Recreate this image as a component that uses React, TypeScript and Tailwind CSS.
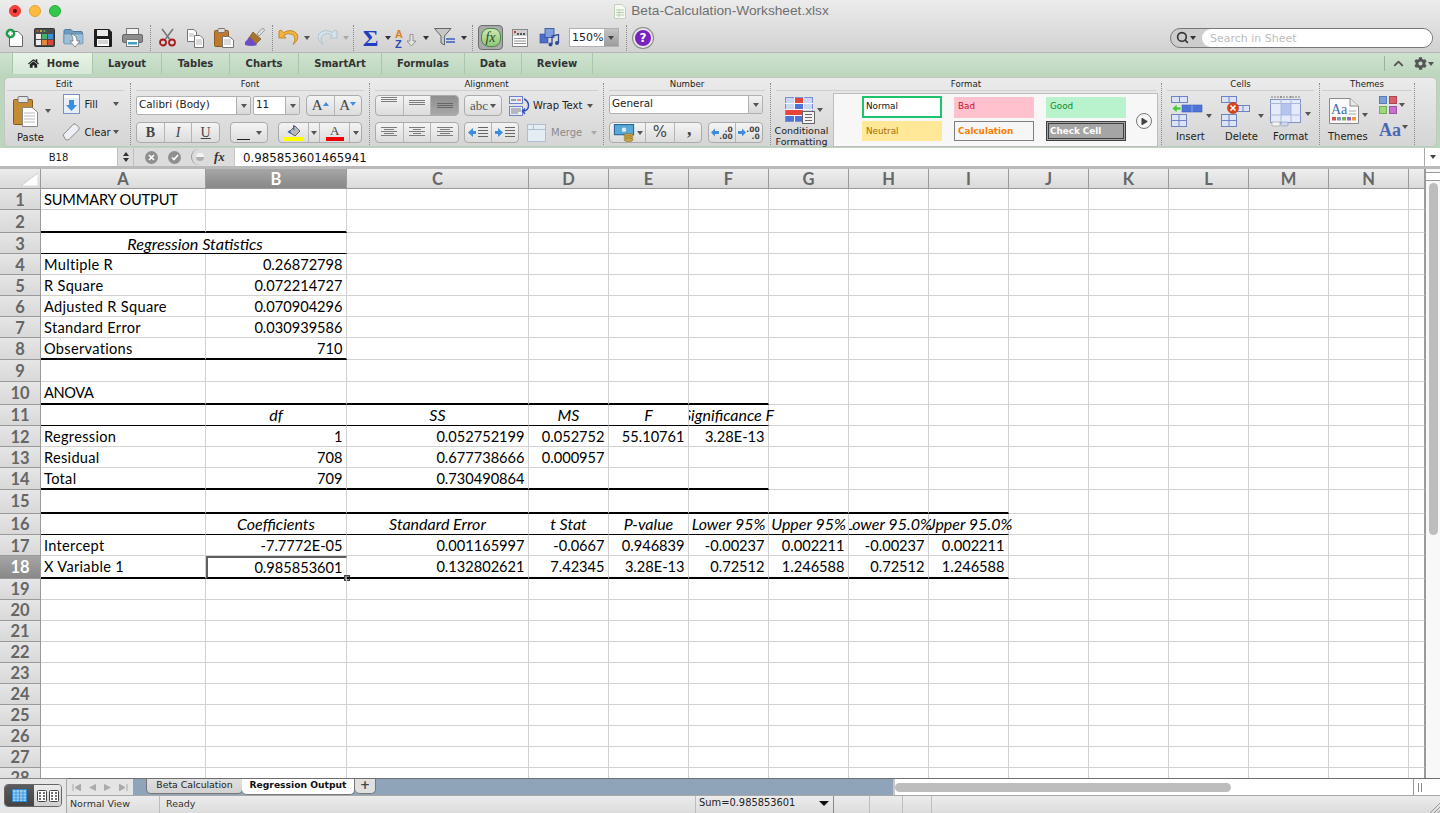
import type { ReactNode } from 'react';
import { FaCog, FaHome, FaPlay } from 'react-icons/fa';
import { ChevronUp, Search } from 'lucide-react';

const columns = ['A', 'B', 'C', 'D', 'E', 'F', 'G', 'H', 'I', 'J', 'K', 'L', 'M', 'N', ''];
const rowCount = 28;

type Align = 'l' | 'r' | 'c';
const cells: Record<string, [string, Align]> = {
    A1: ['SUMMARY OUTPUT', 'l'],
    A4: ['Multiple R', 'l'], B4: ['0.26872798', 'r'],
    A5: ['R Square', 'l'], B5: ['0.072214727', 'r'],
    A6: ['Adjusted R Square', 'l'], B6: ['0.070904296', 'r'],
    A7: ['Standard Error', 'l'], B7: ['0.030939586', 'r'],
    A8: ['Observations', 'l'], B8: ['710', 'r'],
    A10: ['ANOVA', 'l'],
    B11: ['df', 'c'], C11: ['SS', 'c'], D11: ['MS', 'c'], E11: ['F', 'c'], F11: ['Significance F', 'c'],
    A12: ['Regression', 'l'], B12: ['1', 'r'], C12: ['0.052752199', 'r'], D12: ['0.052752', 'r'], E12: ['55.10761', 'r'], F12: ['3.28E-13', 'r'],
    A13: ['Residual', 'l'], B13: ['708', 'r'], C13: ['0.677738666', 'r'], D13: ['0.000957', 'r'],
    A14: ['Total', 'l'], B14: ['709', 'r'], C14: ['0.730490864', 'r'],
    B16: ['Coefficients', 'c'], C16: ['Standard Error', 'c'], D16: ['t Stat', 'c'], E16: ['P-value', 'c'], F16: ['Lower 95%', 'c'], G16: ['Upper 95%', 'c'], H16: ['Lower 95.0%', 'c'], I16: ['Upper 95.0%', 'c'],
    A17: ['Intercept', 'l'], B17: ['-7.7772E-05', 'r'], C17: ['0.001165997', 'r'], D17: ['-0.0667', 'r'], E17: ['0.946839', 'r'], F17: ['-0.00237', 'r'], G17: ['0.002211', 'r'], H17: ['-0.00237', 'r'], I17: ['0.002211', 'r'],
    A18: ['X Variable 1', 'l'], B18: ['0.985853601', 'r'], C18: ['0.132802621', 'r'], D18: ['7.42345', 'r'], E18: ['3.28E-13', 'r'], F18: ['0.72512', 'r'], G18: ['1.246588', 'r'], H18: ['0.72512', 'r'], I18: ['1.246588', 'r'],
};

// bottom rules of the regression tables: row -> [number of columns, thick?]
const rules: Record<number, [number, boolean]> = {
    2: [2, true], 3: [2, false], 8: [2, true],
    10: [6, true], 11: [6, false], 14: [6, true],
    15: [9, true], 16: [9, false], 18: [9, true],
};

const clippedLeft = ['F11', 'H16', 'I16'];

// these rows sit a pixel higher in their band
const isHighRow = (r: number) => r === 10 || r === 11 || r === 15 || r === 16 || r >= 18;

function Caret({ color = 'border-t-[#555]' }: { color?: string }) {
    return <span className={`block w-0 h-0 border-x-[3.5px] border-x-transparent border-t-[4px] ${color}`} />;
}

function Sep() {
    return <div className="w-[1px] h-[26px] border-l border-dotted border-[#8a8a8a] mx-[2.5px] shrink-0" />;
}

function Slot({ w, children }: { w: string; children: ReactNode }) {
    return <div className={`${w} h-full flex items-center justify-center shrink-0`}>{children}</div>;
}

function Seg({ className, children }: { className: string; children: ReactNode }) {
    return (
        <div className={`${className} h-[21px] flex rounded-[4px] border border-[#ababab] bg-gradient-to-b from-[#f4f4f4] to-[#dcdcdc] shrink-0`}>
            {children}
        </div>
    );
}

function SegCell({ className = 'flex-1', dark = false, children }: { className?: string; dark?: boolean; children: ReactNode }) {
    return (
        <div className={`${className} flex items-center justify-center border-r border-[#b5b5b5] last:border-r-0 ${dark ? 'bg-gradient-to-b from-[#8f8f8f] to-[#a8a8a8] rounded-r-[3px]' : ''}`}>
            {children}
        </div>
    );
}

function Combo({ className, label }: { className: string; label: string }) {
    return (
        <div className={`${className} h-[19px] flex bg-white border border-[#b0b0b0] rounded-[2px] shrink-0`}>
            <span className="flex-1 pl-[2px] text-[10.4px] leading-[15px] text-[#222] whitespace-nowrap overflow-hidden">{label}</span>
            <span className="w-[14px] flex items-center justify-center border-l border-[#b0b0b0] bg-gradient-to-b from-[#f2f2f2] to-[#d8d8d8]"><Caret /></span>
        </div>
    );
}

function Group({ title, className, lineClass = 'mx-[3px]', children }: { title: string; className: string; lineClass?: string; children: ReactNode }) {
    return (
        <div className={`${className} h-full shrink-0 relative flex flex-col`}>
            <div className={`h-[13px] ${lineClass} border-b border-[#cfcfcf] text-center text-[8.6px] leading-[13px] text-[#222]`}>{title}</div>
            {children}
        </div>
    );
}

function GroupDots() {
    return <div className="w-[1px] h-[62px] mt-[5px] border-l border-dotted border-[#8a8a8a] shrink-0" />;
}

function AlignLines({ rows, widths, dark = false }: { rows: number; widths?: number[]; dark?: boolean }) {
    const list = Array.from({ length: rows });
    return (
        <svg width="18" height="13" viewBox="0 0 18 13">
            {list.map((_, i) => {
                const w = widths ? widths[i % widths.length] : 16;
                return <rect key={i} x={(18 - w) / 2} y={1 + i * 2} width={w} height="1" fill={dark ? '#666' : '#7d7d7d'} />;
            })}
        </svg>
    );
}

function InsertIcon() {
    return (
        <svg width="36" height="32" viewBox="0 0 36 32">
            <g fill="#dbe3f7" stroke="#6f82c4">
                <rect x="2.5" y="1.5" width="16" height="6" /><line x1="10.5" x2="10.5" y1="1" y2="8" />
                <rect x="2.5" y="19.5" width="15" height="12" /><line x1="10" x2="10" y1="19" y2="32" /><line x1="2" x2="18" y1="25.5" y2="25.5" />
            </g>
            <rect x="13" y="10" width="20" height="7" fill="#4f74d8" stroke="#3d5cb8" strokeWidth=".6" />
            <line x1="23" x2="23" y1="10" y2="17" stroke="#8aa4ea" />
            <path d="M3 13.5 L8 9 V12 H12 V15 H8 V18 Z" fill="#48c83c" stroke="#fff" strokeWidth=".5" />
        </svg>
    );
}

function DeleteIcon() {
    return (
        <svg width="32" height="32" viewBox="0 0 32 32">
            <g fill="#dbe3f7" stroke="#6f82c4">
                <rect x="1.5" y="1.5" width="15" height="6" /><line x1="9" x2="9" y1="1" y2="8" />
                <rect x="1.5" y="19.5" width="15" height="12" /><line x1="9" x2="9" y1="19" y2="32" /><line x1="1" x2="17" y1="25.5" y2="25.5" />
                <rect x="16.5" y="10.5" width="13" height="6" /><line x1="23" x2="23" y1="10" y2="17" />
            </g>
            <circle cx="13" cy="13" r="5.5" fill="#d9441e" stroke="#a8300f" strokeWidth=".6" />
            <path d="M10.5 10.5 L15.5 15.5 M15.5 10.5 L10.5 15.5" stroke="#fff" strokeWidth="1.6" />
        </svg>
    );
}

function FormatIcon() {
    return (
        <svg width="32" height="32" viewBox="0 0 32 32">
            <path d="M1 2 H31 M11 1 V3 M21 1 V3" stroke="#555" strokeWidth=".7" strokeDasharray="2 1" />
            <rect x=".5" y="4.5" width="30" height="23" fill="#e4eafa" stroke="#8393c8" />
            <rect x="11" y="8" width="10" height="12" fill="#b4c3ef" />
            <path d="M11 4 V27 M21 4 V27 M0 8.5 H31 M0 20 H31" stroke="#aab6de" fill="none" />
            <path d="M2 27 H10 V30 Q10 31 9 31 H3 Q2 31 2 30 Z" fill="#f5f5f5" stroke="#999" strokeWidth=".6" />
            <path d="M11 27 H18 V30 Q18 31 17 31 H12 Q11 31 11 30 Z" fill="#cfd8ef" stroke="#8393c8" strokeWidth=".6" />
        </svg>
    );
}

function ColTableIcon() {
    return (
        <svg width="30" height="27" viewBox="0 0 30 27">
            <rect x=".5" y=".5" width="27" height="24" fill="#c9d6f4" stroke="#7b8fd0" />
            <path d="M9.5 0 V25 M18.5 0 V25 M0 6.5 H28 M0 12.5 H28 M0 18.5 H28" stroke="#f0f4ff" />
            <rect x="10" y="1" width="8" height="5" fill="#e8453a" />
            <rect x="10" y="7" width="8" height="5" fill="#4f74d8" />
            <rect x="1" y="13" width="17" height="5" fill="#e8453a" />
            <rect x="1" y="19" width="8" height="5" fill="#4f74d8" />
            <rect x="10" y="19" width="8" height="5" fill="#4f74d8" />
            <rect x="17.5" y="14.5" width="12" height="12" fill="#f2f2f2" stroke="#666" />
            <path d="M20 17.5 H27 M20 20.5 H27 M20 23.5 H27" stroke="#444" strokeWidth=".8" />
        </svg>
    );
}

function ThemeDocIcon() {
    return (
        <svg width="32" height="28" viewBox="0 0 32 28">
            <path d="M1.5 1.5 H22 L30.5 9 V26.5 H1.5 Z" fill="#fafafa" stroke="#8a8a8a" />
            <path d="M22 1.5 V9 H30.5" fill="#e8e8e8" stroke="#8a8a8a" />
            <text x="3" y="17" fontFamily="Liberation Serif, serif" fontSize="14" fill="#3c6fb4">Aa</text>
            <path d="M21 14 H28 M21 17 H28" stroke="#aaa" />
            <rect x="4" y="20" width="4" height="3.5" fill="#d8574a" /><rect x="9" y="20" width="4" height="3.5" fill="#7b93c8" /><rect x="14" y="20" width="4" height="3.5" fill="#7fb04a" /><rect x="19" y="20" width="4" height="3.5" fill="#9a65b4" /><rect x="24" y="20" width="4" height="3.5" fill="#f0983c" />
        </svg>
    );
}

function SplitGridIcon() {
    return (
        <svg width="10" height="12" viewBox="0 0 10 12">
            <rect x=".5" y=".5" width="9" height="11" rx="1" fill="#fff" stroke="#444" />
            <path d="M2 3 H4 M6 3 H8 M2 6 H4 M6 6 H8 M2 9 H4 M6 9 H8" stroke="#444" strokeWidth="1.4" />
        </svg>
    );
}

function Toolbar() {
    return (
        <div className="h-[31px] flex items-center">
            <Slot w="w-[30px]">
                <svg width="20" height="20" viewBox="0 0 20 20">
                    <path d="M4.5 3.5 H13 L17.5 8 V18.5 H4.5 Z" fill="#fff" stroke="#666" />
                    <circle cx="5.5" cy="5.5" r="4.5" fill="#17a346" stroke="#0b6e2c" strokeWidth=".5" />
                    <path d="M3 5.5 H8 M5.5 3 V8" stroke="#fff" strokeWidth="1.8" />
                </svg>
            </Slot>
            <Slot w="w-[29px]">
                <svg width="21" height="19" viewBox="0 0 21 19">
                    <rect x=".5" y=".5" width="20" height="18" rx="1" fill="#4c4c4c" stroke="#333" />
                    <circle cx="3.5" cy="3" r="1" fill="#e24c3f" /><circle cx="7" cy="3" r="1" fill="#eec23c" /><circle cx="10.5" cy="3" r="1" fill="#59b851" />
                    <rect x="2" y="6" width="5" height="5" fill="#eeeeee" /><rect x="8" y="6" width="5" height="5" fill="#46b06a" /><rect x="14" y="6" width="5" height="5" fill="#3f8fd8" />
                    <rect x="2" y="12" width="5" height="5" fill="#eeeeee" /><rect x="8" y="12" width="5" height="5" fill="#e8863a" /><rect x="14" y="12" width="5" height="5" fill="#d24a3c" />
                </svg>
            </Slot>
            <Slot w="w-[29px]">
                <svg width="21" height="20" viewBox="0 0 21 20">
                    <path d="M1 3 Q1 1.5 2.5 1.5 H8 L10 3.5 H18 Q19.5 3.5 19.5 5 V15 H1 Z" fill="#6e9cc0" stroke="#4d7a9c" />
                    <path d="M1 6 H20 V15 Q20 16 19 16 H2 Q1 16 1 15 Z" fill="#9cc0d8" stroke="#5a88a8" strokeWidth=".6" />
                    <path d="M8 6 Q14 7 14 13 H17 L12 19 L7 13 H10 Q10.5 9 8 6 Z" fill="#fff" stroke="#555" strokeWidth=".6" />
                </svg>
            </Slot>
            <Slot w="w-[29px]">
                <svg width="18" height="18" viewBox="0 0 18 18">
                    <path d="M0 1 Q0 0 1 0 H15 L18 3 V17 Q18 18 17 18 H1 Q0 18 0 17 Z" fill="#1e1e1e" />
                    <rect x="3" y="1" width="11" height="6" fill="#e8e8e8" />
                    <rect x="3" y="10" width="12" height="7" fill="#fff" />
                    <path d="M4 12 H14 M4 14 H14" stroke="#888" strokeWidth=".7" />
                </svg>
            </Slot>
            <Slot w="w-[30px]">
                <svg width="21" height="19" viewBox="0 0 21 19">
                    <rect x="4.5" y=".5" width="12" height="6" fill="#f4f4f4" stroke="#777" />
                    <rect x=".5" y="6.5" width="20" height="8" rx="1.5" fill="#8c8c8c" stroke="#666" />
                    <rect x="4.5" y="11.5" width="12" height="7" fill="#fff" stroke="#777" />
                    <rect x="6" y="14" width="9" height="2.5" fill="#3da0c8" />
                </svg>
            </Slot>
            <Sep />
            <Slot w="w-[28px]">
                <svg width="19" height="19" viewBox="0 0 19 19" fill="none">
                    <path d="M4 1 L11.5 11 M15 1 L7.5 11" stroke="#777" strokeWidth="1.6" />
                    <circle cx="5" cy="14.5" r="3" stroke="#a81e1e" strokeWidth="1.8" />
                    <circle cx="14" cy="14.5" r="3" stroke="#a81e1e" strokeWidth="1.8" />
                </svg>
            </Slot>
            <Slot w="w-[28px]">
                <svg width="19" height="20" viewBox="0 0 19 20">
                    <path d="M1.5 1.5 H8 L10.5 4 V13.5 H1.5 Z" fill="#fff" stroke="#777" />
                    <path d="M8.5 7.5 H14 L17.5 11 V19.5 H8.5 Z" fill="#fff" stroke="#777" />
                    <path d="M3 6 H8 M3 8 H8 M10 12 H16 M10 14 H16 M10 16 H16" stroke="#999" strokeWidth=".7" />
                </svg>
            </Slot>
            <Slot w="w-[30px]">
                <svg width="20" height="20" viewBox="0 0 20 20">
                    <rect x=".5" y="2.5" width="14" height="16" rx="1" fill="#c07a2c" stroke="#8a5a20" />
                    <rect x="4" y=".5" width="7" height="4" rx="1" fill="#ddd" stroke="#777" />
                    <path d="M8.5 8.5 H15 L19.5 12 V19.5 H8.5 Z" fill="#fff" stroke="#777" />
                    <path d="M10 12 H17 M10 14 H17 M10 16 H17" stroke="#999" strokeWidth=".7" />
                </svg>
            </Slot>
            <Slot w="w-[30px]">
                <svg width="21" height="19" viewBox="0 0 21 19">
                    <path d="M13 6 L18 0.5 Q20.5 0 20.5 2.5 L15 8 Z" fill="#ddd" stroke="#777" strokeWidth=".6" />
                    <path d="M9 4 L17 11 L11 17 L6 15 L4 11 Z" fill="#a8742c" stroke="#6e4a18" strokeWidth=".6" />
                    <path d="M1 14 L6 9 L13 17 Q8 19 1 17 Z" fill="#6a4cc8" />
                </svg>
            </Slot>
            <Sep />
            <Slot w="w-[27px]">
                <svg width="22" height="17" viewBox="0 0 22 17">
                    <path d="M1 2 V9 H8 L5.5 6.5 Q10 3 14.5 5.5 Q19 9 15 15.5 Q22 10 19 5 Q14 -1 5.5 3.5 L3 1 Z" fill="#f3b33d" stroke="#b97a16" strokeWidth=".8" />
                </svg>
            </Slot>
            <Slot w="w-[10px]"><Caret /></Slot>
            <Slot w="w-[29px]">
                <svg width="22" height="17" viewBox="0 0 22 17">
                    <path d="M21 2 V9 H14 L16.5 6.5 Q12 3 7.5 5.5 Q3 9 7 15.5 Q0 10 3 5 Q8 -1 16.5 3.5 L19 1 Z" fill="#d4e2ec" stroke="#a6bccc" strokeWidth=".8" />
                </svg>
            </Slot>
            <Slot w="w-[9px]"><Caret color="border-t-[#aaa]" /></Slot>
            <Sep />
            <div className="w-[2px] shrink-0" />
            <Slot w="w-[25px]"><span className="font-['Liberation_Serif',serif] text-[24px] leading-none font-bold text-[#1f3fc0]">Σ</span></Slot>
            <Slot w="w-[9px]"><Caret color="border-t-[#333]" /></Slot>
            <Slot w="w-[28px]">
                <div className="relative w-[22px] h-[20px]">
                    <span className="absolute left-0 -top-[2px] font-['Liberation_Sans',sans-serif] text-[11px] font-bold text-[#d8841c]">A</span>
                    <span className="absolute left-0 top-[8px] font-['Liberation_Sans',sans-serif] text-[11px] font-bold text-[#2a48b8]">Z</span>
                    <svg className="absolute right-0 top-[6px]" width="11" height="13" viewBox="0 0 11 13"><path d="M4 0.5 H7 V7 H10 L5.5 12 L1 7 H4 Z" fill="#e4e4e4" stroke="#777" strokeWidth=".7" /></svg>
                </div>
            </Slot>
            <Slot w="w-[11px]"><Caret color="border-t-[#333]" /></Slot>
            <Slot w="w-[28px]">
                <svg width="22" height="19" viewBox="0 0 22 19">
                    <path d="M.5 .5 H17 L10.5 8 V17 L7 15 V8 Z" fill="#c8c8c8" stroke="#666" />
                    <path d="M12 11 H21 M12 14 H21" stroke="#3a5cc0" strokeWidth="1.4" />
                </svg>
            </Slot>
            <Slot w="w-[10px]"><Caret color="border-t-[#333]" /></Slot>
            <Sep />
            <div className="w-[2px] shrink-0" />
            <Slot w="w-[27px]">
                <div className="w-[25px] h-[25px] rounded-[4px] border border-[#6e6e6e] bg-[#a9a9a9] flex items-center justify-center">
                    <span className="w-[20px] h-[19px] rounded-[8px] border border-[#4a8a4a] bg-gradient-to-b from-[#cbe8b0] to-[#8cc878] flex items-center justify-center font-['Liberation_Serif',serif] italic text-[14px] leading-none text-[#2a4a2a]">fx</span>
                </div>
            </Slot>
            <Slot w="w-[31px]">
                <svg width="16" height="18" viewBox="0 0 16 18">
                    <rect x=".5" y=".5" width="15" height="17" fill="#fff" stroke="#888" />
                    <rect x="1" y="1" width="14" height="6" fill="#cfcfcf" />
                    <rect x="2" y="2" width="2" height="2" fill="#d8362a" />
                    <rect x="5" y="4" width="2" height="2" fill="#555" /><rect x="8" y="4" width="2" height="2" fill="#555" /><rect x="11" y="4" width="2" height="2" fill="#555" />
                    <path d="M2 9.5 H14 M2 12 H14 M2 14.5 H14" stroke="#777" strokeWidth=".8" />
                </svg>
            </Slot>
            <Slot w="w-[29px]">
                <svg width="21" height="19" viewBox="0 0 21 19">
                    <rect x="1" y="6" width="8" height="9" fill="#4d6ec8" stroke="#2f4a98" strokeWidth=".6" />
                    <rect x="6" y=".5" width="9" height="9" fill="#7fa0e0" stroke="#2f4a98" strokeWidth=".8" />
                    <path d="M13 16 V8 L19.5 6.5 V15" fill="none" stroke="#2f4a98" strokeWidth="1.3" />
                    <circle cx="11.5" cy="16.5" r="2" fill="#2f4a98" /><circle cx="18" cy="15" r="2" fill="#2f4a98" />
                </svg>
            </Slot>
            <div className="ml-[5px] w-[50px] h-[19px] flex bg-white border border-[#b0b0b0] shrink-0">
                <span className="flex-1 text-[11px] leading-[17px] pl-[2px] text-[#222]">150%</span>
                <span className="w-[14px] flex items-center justify-center bg-gradient-to-b from-[#c4c4c4] to-[#9c9c9c]"><Caret color="border-t-[#444]" /></span>
            </div>
            <div className="ml-[4px]"><Sep /></div>
            <div className="ml-[4px] w-[20px] h-[20px] rounded-full bg-[#7a22c0] border-2 border-[#e6e6e6] shadow-[0_0_0_1px_#888] flex items-center justify-center text-[12px] font-bold text-white">?</div>
            <div className="ml-auto mr-[7px] w-[263px] h-[20px] rounded-full border border-[#777] bg-[#cdcdcd] flex items-center shrink-0">
                <div className="w-[31px] flex items-center pl-[5px] gap-[1px]">
                    <Search size={13} strokeWidth={3} className="text-[#333]" />
                    <Caret color="border-t-[#333]" />
                </div>
                <div className="flex-1 h-full rounded-full bg-white pl-[8px] text-[11px] leading-[20px] text-[#bcbcbc]">Search in Sheet</div>
            </div>
        </div>
    );
}

function TabStrip() {
    const tabs: [string, string][] = [
        ['Layout', 'w-[69px]'], ['Tables', 'w-[68px]'], ['Charts', 'w-[69px]'], ['SmartArt', 'w-[83px]'],
        ['Formulas', 'w-[83px]'], ['Data', 'w-[57px]'], ['Review', 'w-[71px]'],
    ];
    return (
        <div className="h-[21px] flex bg-gradient-to-b from-[#cfe2cf] to-[#bed7bf] text-[10px] font-bold text-[#333]">
            <div className="w-[13px] border-r border-[#a9c6ab] ml-0" />
            <div className="w-[80px] flex items-center justify-center gap-[8px] bg-gradient-to-b from-[#e8f3e8] to-[#d5e8d6] border-r border-[#a9c6ab] pl-[2px]">
                <FaHome size={11} className="text-[#222]" />
                <span>Home</span>
            </div>
            {tabs.map(([name, w]) => (
                <div key={name} className={`${w} flex items-center justify-center border-r border-[#a9c6ab]`}>{name}</div>
            ))}
            <div className="ml-auto mr-[2px] flex items-center">
                <div className="h-[15px] border-l border-[#9ab49c]" />
                <ChevronUp size={15} strokeWidth={3} className="ml-[6px] text-[#555]" />
                <FaCog size={13} className="ml-[8px] text-[#555]" />
                <span className="ml-[1px] mr-[4px]"><Caret /></span>
            </div>
        </div>
    );
}

function Ribbon() {
    return (
        <div className="h-[74px] bg-[#bcd6bd] pl-[4px] pr-[3px] pt-[3px] pb-[1px]">
            <div className="h-[70px] flex rounded-[5px] border border-[#c0c8c0] bg-gradient-to-b from-[#ebebeb] to-[#d5d5d5]">
                <Group title="Edit" className="w-[125px]" lineClass="ml-[2px] mr-[6px] pr-[3px]">
                    <div className="flex">
                        <div className="w-[37px] ml-[8px] flex flex-col items-start">
                            <svg className="mt-[5px]" width="25" height="31" viewBox="0 0 25 31">
                                <rect x=".5" y="3.5" width="19" height="25" rx="1" fill="#c58a34" stroke="#85581c" />
                                <rect x="5" y=".5" width="10" height="6" rx="1" fill="#e4e4e4" stroke="#777" />
                                <path d="M9.5 11.5 H19 L24.5 16 V30.5 H9.5 Z" fill="#fff" stroke="#888" />
                                <path d="M11 17 H22 M11 20 H22 M11 23 H22 M11 26 H22" stroke="#aaa" strokeWidth=".8" />
                            </svg>
                            <span className="text-[10px] leading-none mt-[6px] ml-[4px] text-[#222]">Paste</span>
                        </div>
                        <span className="mt-[18px] ml-[-5.5px]"><Caret /></span>
                        <div className="ml-[11px] flex flex-col">
                            <div className="h-[22px] mt-[2px] flex items-center">
                                <svg className="ml-[1px]" width="17" height="20" viewBox="0 0 17 20">
                                    <rect x=".5" y=".5" width="16" height="19" fill="#e8eef8" stroke="#7a90c4" />
                                    <rect x="1" y="1" width="15" height="3" fill="#fff" />
                                    <path d="M6 6 H11 V11 H14 L8.5 17 L3 11 H6 Z" fill="#3d8de0" />
                                </svg>
                                <span className="ml-[5px] w-[28px] text-[10px] text-[#222]">Fill</span>
                                <Caret />
                            </div>
                            <div className="h-[22px] mt-[6px] flex items-center">
                                <svg width="18" height="18" viewBox="0 0 18 18">
                                    <path d="M1 12 L11 1.5 Q12.5 .5 14 1.5 L17 4.5 Q17.5 6 16.5 7 L7 16.5 Q5 17.5 3.5 16.5 Z" fill="#eceff4" stroke="#8a8a8a" />
                                </svg>
                                <span className="ml-[5px] w-[28px] text-[10px] text-[#222]">Clear</span>
                                <Caret />
                            </div>
                        </div>
                    </div>
                </Group>
                <GroupDots />
                <Group title="Font" className="w-[238px]" lineClass="mx-[5px]">
                    <div className="pl-[5px] pt-[4px] flex flex-col gap-[6px]">
                        <div className="h-[21px] flex items-center">
                            <Combo className="w-[115px]" label="Calibri (Body)" />
                            <Combo className="w-[47px] ml-[2px]" label="11" />
                            <Seg className="w-[56px] ml-[6px]">
                                <SegCell><span className="font-['Liberation_Serif',serif] text-[15px] leading-[17px] text-[#444]">A</span><span className="mb-[3px] w-0 h-0 border-x-[3px] border-x-transparent border-b-[4px] border-b-[#3d8de0]" /></SegCell>
                                <SegCell><span className="font-['Liberation_Serif',serif] text-[15px] leading-[17px] text-[#444]">A</span><span className="mb-[3px] w-0 h-0 border-x-[3px] border-x-transparent border-t-[4px] border-t-[#3d8de0]" /></SegCell>
                            </Seg>
                        </div>
                        <div className="h-[21px] flex items-center">
                            <Seg className="w-[84px]">
                                <SegCell><span className="font-['Liberation_Serif',serif] font-bold text-[14px] leading-[17px] text-[#444]">B</span></SegCell>
                                <SegCell><span className="font-['Liberation_Serif',serif] italic text-[14px] leading-[17px] text-[#444]">I</span></SegCell>
                                <SegCell><span className="font-['Liberation_Serif',serif] underline text-[14px] leading-[17px] text-[#444]">U</span></SegCell>
                            </Seg>
                            <Seg className="w-[38px] ml-[10px]">
                                <div className="flex-1 flex items-center justify-center gap-[6px] pt-[1px]">
                                    <span className="w-[13px] h-[1px] mt-[12px] bg-[#222]" />
                                    <Caret />
                                </div>
                            </Seg>
                            <Seg className="w-[84px] ml-[10px]">
                                <SegCell className="w-[31px]">
                                    <div className="flex flex-col items-center">
                                        <svg width="16" height="13" viewBox="0 0 16 13">
                                            <path d="M3 8 L9 2 L14 7 L9 12 Z" fill="#b9b9b9" stroke="#444" strokeWidth=".8" />
                                            <path d="M8 1 Q7 5 8.5 6" fill="none" stroke="#2a5cc0" strokeWidth="1.2" />
                                            <path d="M1.5 8 L4 6 L5 10 Z" fill="#2a5cc0" />
                                        </svg>
                                        <span className="w-[20px] h-[4px] bg-[#ffff00]" />
                                    </div>
                                </SegCell>
                                <SegCell className="w-[11px]"><Caret /></SegCell>
                                <SegCell className="w-[31px]">
                                    <div className="flex flex-col items-center">
                                        <span className="font-['Liberation_Serif',serif] text-[13px] leading-[13px] text-[#444]">A</span>
                                        <span className="w-[18px] h-[4px] bg-[#f00000]" />
                                    </div>
                                </SegCell>
                                <SegCell className="w-[11px]"><Caret /></SegCell>
                            </Seg>
                        </div>
                    </div>
                </Group>
                <GroupDots />
                <Group title="Alignment" className="w-[233px]" lineClass="mx-[5px]">
                    <div className="pl-[5px] pt-[4px] flex flex-col gap-[6px]">
                        <div className="h-[21px] flex items-center">
                            <Seg className="w-[84px]">
                                <SegCell><div className="mb-[6px]"><AlignLines rows={3} /></div></SegCell>
                                <SegCell><AlignLines rows={3} /></SegCell>
                                <SegCell dark><div className="mt-[6px]"><AlignLines rows={3} dark /></div></SegCell>
                            </Seg>
                            <Seg className="w-[38px] ml-[5px]">
                                <div className="flex-1 flex items-center justify-center gap-[2px]">
                                    <span className="font-['Liberation_Serif',serif] text-[13px] leading-[17px] text-[#555]">abc</span>
                                    <Caret />
                                </div>
                            </Seg>
                            <svg className="ml-[7px]" width="21" height="20" viewBox="0 0 21 20">
                                <rect x=".5" y=".5" width="13" height="7" fill="#e6ecf8" stroke="#6f82c4" />
                                <path d="M2 4 H7" stroke="#555" /><path d="M8 4 H12" stroke="#e03030" />
                                <rect x=".5" y="10.5" width="13" height="9" fill="#e6ecf8" stroke="#6f82c4" />
                                <path d="M2 13 H12 M2 15 H12 M2 17 H9" stroke="#555" strokeWidth=".7" />
                                <path d="M15 3 Q21 6 19 12 Q18 15 14 15 M16 12.5 L13.5 15 L16 18" fill="none" stroke="#2a4fb8" strokeWidth="1.4" />
                            </svg>
                            <span className="ml-[3px] text-[10px] text-[#222] whitespace-nowrap">Wrap Text</span>
                            <span className="ml-[5px]"><Caret /></span>
                        </div>
                        <div className="h-[21px] flex items-center">
                            <Seg className="w-[84px]">
                                <SegCell><AlignLines rows={5} widths={[16, 10, 16, 10, 16]} /></SegCell>
                                <SegCell><AlignLines rows={5} widths={[16, 8, 16, 8, 16]} /></SegCell>
                                <SegCell><AlignLines rows={5} widths={[16, 10, 16, 10, 16]} /></SegCell>
                            </Seg>
                            <Seg className="w-[55px] ml-[5px]">
                                <SegCell>
                                    <svg width="20" height="13" viewBox="0 0 20 13"><path d="M0 6.5 L5 2 V5 H8 V8 H5 V11 Z" fill="#3d8de0" /><path d="M10 1.5 H20 M10 4.5 H20 M10 7.5 H20 M10 10.5 H20" stroke="#666" strokeWidth="1" /></svg>
                                </SegCell>
                                <SegCell>
                                    <svg width="20" height="13" viewBox="0 0 20 13"><path d="M0 5 H3 V2 L8 6.5 L3 11 V8 H0 Z" fill="#3d8de0" /><path d="M10 1.5 H20 M10 4.5 H20 M10 7.5 H20 M10 10.5 H20" stroke="#666" strokeWidth="1" /></svg>
                                </SegCell>
                            </Seg>
                            <svg className="ml-[8px]" width="19" height="18" viewBox="0 0 19 18">
                                <rect x=".5" y=".5" width="18" height="17" fill="#e4edf4" stroke="#b0bfd0" />
                                <path d="M0 5.5 H19 M6.5 0 V5" stroke="#b0bfd0" />
                            </svg>
                            <span className="ml-[5px] text-[10px] text-[#8a8a8a]">Merge</span>
                            <span className="ml-[9px]"><Caret color="border-t-[#aaa]" /></span>
                        </div>
                    </div>
                </Group>
                <GroupDots />
                <Group title="Number" className="w-[166px]" lineClass="mx-[5px]">
                    <div className="pl-[5px] pt-[4px] flex flex-col gap-[6px]">
                        <div className="h-[21px] flex items-start">
                            <Combo className="w-[154px]" label="General" />
                        </div>
                        <div className="h-[21px] flex items-center">
                            <Seg className="w-[93px]">
                                <SegCell className="w-[37px]">
                                    <svg width="22" height="18" viewBox="0 0 18 16">
                                        <rect x=".5" y=".5" width="17" height="9" fill="#58a8d8" stroke="#2a6a9c" />
                                        <circle cx="9" cy="5" r="2" fill="#d8ecf8" />
                                        <ellipse cx="13" cy="10" rx="4" ry="1.6" fill="#c8a848" stroke="#7a6420" strokeWidth=".5" />
                                        <ellipse cx="13" cy="12" rx="4" ry="1.6" fill="#c8a848" stroke="#7a6420" strokeWidth=".5" />
                                        <ellipse cx="13" cy="14" rx="4" ry="1.6" fill="#c8a848" stroke="#7a6420" strokeWidth=".5" />
                                    </svg>
                                    <span className="ml-[2px]"><Caret /></span>
                                </SegCell>
                                <SegCell className="w-[29px]"><span className="text-[15px] leading-[17px] text-[#444]">%</span></SegCell>
                                <SegCell className="w-[27px] pl-[3px]"><span className="relative -top-[3px] font-['Liberation_Serif',serif] font-bold text-[18px] leading-[19px] text-[#444]">,</span></SegCell>
                            </Seg>
                            <Seg className="w-[55px] ml-[6px]">
                                <SegCell>
                                    <svg width="8" height="9" viewBox="0 0 8 9"><path d="M0 4.5 L4 .5 V3 H8 V6 H4 V8.5 Z" fill="#3d8de0" /></svg>
                                    <span className="flex flex-col items-end text-[7.5px] leading-[7px] font-bold text-[#444]"><span>.0</span><span>.00</span></span>
                                </SegCell>
                                <SegCell>
                                    <svg width="8" height="9" viewBox="0 0 8 9"><path d="M8 4.5 L4 .5 V3 H0 V6 H4 V8.5 Z" fill="#3d8de0" /></svg>
                                    <span className="flex flex-col items-end text-[7.5px] leading-[7px] font-bold text-[#444]"><span>.00</span><span>.0</span></span>
                                </SegCell>
                            </Seg>
                        </div>
                    </div>
                </Group>
                <GroupDots />
                <Group title="Format" className="w-[390px]" lineClass="mx-[5px]">
                    <div className="flex pt-[2px]">
                        <div className="w-[61px] flex flex-col items-center">
                            <div className="h-[31px] flex items-end gap-[2px] pl-[5px]">
                                <ColTableIcon />
                                <span className="mb-[12px]"><Caret /></span>
                            </div>
                            <span className="mt-[1px] text-[9.5px] leading-[11px] text-center text-[#222]">Conditional Formatting</span>
                        </div>
                        <div className="w-[325px] h-[54px] bg-[#f7f7f7] border border-[#bdbdbd] pl-[28px] pt-[2px] flex text-[8.8px] ml-[1px]">
                            <div className="grid grid-cols-[80px_80px_80px] grid-rows-[22px_20px] gap-x-[12px] gap-y-[3px]">
                                <div className="bg-white border-2 border-[#1ec46c] pl-[2px] leading-[16px] text-[#111]">Normal</div>
                                <div className="bg-[#ffc1cd] pl-[4px] leading-[18px] text-[#c8102e] mt-[1px]">Bad</div>
                                <div className="bg-[#b9f3cd] pl-[4px] leading-[18px] text-[#0a8a2a] mt-[1px]">Good</div>
                                <div className="bg-[#ffe998] pl-[4px] leading-[20px] text-[#a56c00]">Neutral</div>
                                <div className="bg-[#f6f6f6] border border-[#7f7f7f] pl-[3px] leading-[18px] font-bold text-[#fa7d00]">Calculation</div>
                                <div className="bg-[#a5a5a5] border-[3px] border-double border-[#3f3f3f] pl-[1px] leading-[14px] font-bold text-white">Check Cell</div>
                            </div>
                            <div className="ml-[10px] mt-[17px] w-[16px] h-[16px] rounded-full border border-[#777] bg-[#f6f6f6] flex items-center justify-center">
                                <FaPlay size={7} className="text-[#444] ml-[1px]" />
                            </div>
                        </div>
                    </div>
                </Group>
                <GroupDots />
                <Group title="Cells" className="w-[157px]" lineClass="mx-[5px]">
                    <div className="flex pl-[7px]">
                        <div className="w-[51px] flex flex-col">
                            <div className="h-[36px] flex items-center gap-[1px] pt-[4px]"><InsertIcon /><span className="mt-[10px]"><Caret /></span></div>
                            <span className="text-[10px] leading-[20px] text-[#222] pl-[7px]">Insert</span>
                        </div>
                        <div className="w-[50px] flex flex-col">
                            <div className="h-[36px] flex items-center gap-[6px] pt-[4px]"><DeleteIcon /><span className="mt-[10px]"><Caret /></span></div>
                            <span className="text-[10px] leading-[20px] text-[#222] pl-[5px]">Delete</span>
                        </div>
                        <div className="w-[48px] flex flex-col">
                            <div className="h-[36px] flex items-center gap-[3px] pt-[4px]"><FormatIcon /><span className="mt-[6px]"><Caret /></span></div>
                            <span className="text-[10px] leading-[20px] text-[#222] pl-[3px]">Format</span>
                        </div>
                    </div>
                </Group>
                <GroupDots />
                <Group title="Themes" className="w-[94px]" lineClass="mx-[2px]">
                    <div className="flex pl-[8px]">
                        <div className="w-[51px] flex flex-col">
                            <div className="h-[36px] flex items-center gap-[2px] pt-[3px]"><ThemeDocIcon /><span className="mt-[8px]"><Caret /></span></div>
                            <span className="text-[10px] leading-[20px] text-[#222]">Themes</span>
                        </div>
                        <div className="flex flex-col pt-[4px]">
                            <div className="flex items-center gap-[2px] h-[20px]">
                                <div className="grid grid-cols-2 gap-[2px]">
                                    <span className="w-[8px] h-[8px] bg-[#7ba0d6] border border-[#5a7cb0]" />
                                    <span className="w-[8px] h-[8px] bg-[#d8606a] border border-[#a84850]" />
                                    <span className="w-[8px] h-[8px] bg-[#9ad87a] border border-[#78b058]" />
                                    <span className="w-[8px] h-[8px] bg-[#c870d0] border border-[#a050a8]" />
                                </div>
                                <Caret />
                            </div>
                            <div className="flex items-center gap-[1px] mt-[6px]">
                                <span className="font-['Liberation_Serif',serif] font-bold text-[18px] leading-[18px] text-[#4a68b8]">Aa</span>
                                <span className="mb-[6px]"><Caret /></span>
                            </div>
                        </div>
                    </div>
                </Group>
                <GroupDots />
            </div>
        </div>
    );
}

function FormulaBar() {
    return (
        <div className="h-[21px] flex border-b-[3px] border-b-[#b9b9b9] bg-white">
            <div className="w-[117px] text-center text-[10px] leading-[20px] text-[#222]">B18</div>
            <div className="w-[17px] bg-[#dcdcdc] border-x border-[#c0c0c0] flex flex-col items-center justify-center gap-[2px]">
                <span className="w-0 h-0 border-x-[3px] border-x-transparent border-b-[4px] border-b-[#333]" />
                <Caret color="border-t-[#333]" />
            </div>
            <div className="w-[100px] bg-[#dcdcdc] flex items-center">
                <span className="ml-[11px] w-[13px] h-[13px] rounded-full bg-[#8f8f8f] flex items-center justify-center">
                    <svg width="7" height="7" viewBox="0 0 7 7"><path d="M1 1 L6 6 M6 1 L1 6" stroke="#fff" strokeWidth="1.6" /></svg>
                </span>
                <span className="ml-[10px] w-[13px] h-[13px] rounded-full bg-[#8f8f8f] flex items-center justify-center">
                    <svg width="8" height="7" viewBox="0 0 8 7"><path d="M1 3.5 L3 5.5 L7 1" fill="none" stroke="#fff" strokeWidth="1.6" /></svg>
                </span>
                <span className="ml-[10px] w-[16px] h-[16px] rounded-full border-l border-[#999] flex items-center justify-center">
                    <span className="w-[8px] h-[8px] rounded-full bg-gradient-to-b from-[#f4f4f4] from-50% to-[#b0b0b0] to-50%" />
                </span>
                <span className="ml-[7px] font-['Liberation_Serif',serif] italic font-bold text-[13px] text-[#333]">fx</span>
            </div>
            <div className="flex-1 pl-[8px] text-[11.8px] leading-[20px] text-[#111] border-l border-[#c8c8c8]">0.985853601465941</div>
            <div className="w-[16px] h-[18px] flex items-center justify-center border-l border-[#aaa] bg-white"><Caret color="border-t-[#444]" /></div>
        </div>
    );
}

function Sheet() {
    const rows = Array.from({ length: rowCount }, (_, i) => i + 1);
    return (
        <div className="flex-1 min-h-0 flex">
            <div className="w-[1425px] overflow-hidden font-['Lato',sans-serif] text-[14.6px] text-black">
                <div className="grid grid-cols-[41px_165px_141px_182px_80px_80px_80px_80px_80px_80px_80px_80px_80px_80px_80px_16px] grid-rows-[20px_21px_23px_21px_21px_21px_21px_21px_22px_22px_23px_21px_21px_21px_22px_24px_21px_21px_23px_21px_21px_21px_21px_21px_21px_21px_21px_21px_21px]">
                    <div className="bg-gradient-to-b from-[#ececec] to-[#d9d9d9] border-r border-b border-[#9a9a9a] flex items-end justify-end pr-[2px] pb-[2px]">
                        <svg width="17" height="13" viewBox="0 0 17 13"><path d="M17 0 V13 H0 Z" fill="#fff" stroke="#b5b5b5" strokeWidth=".5" /></svg>
                    </div>
                    {columns.map((c, i) => (
                        <div
                            key={i}
                            className={`border-r border-b border-[#9a9a9a] flex items-center justify-center pt-[2px] font-bold text-[16.5px] ${c === 'B' ? 'bg-gradient-to-b from-[#a6a6a6] to-[#888] text-white' : 'bg-gradient-to-b from-[#efefef] to-[#dadada] text-[#666]'}`}
                        >
                            {c}
                        </div>
                    ))}
                    {rows.map((r) => (
                        <SheetRow key={r} r={r} />
                    ))}
                </div>
            </div>
            <div className="w-[15px] bg-[#f8f8f8] border-l border-[#9a9a9a] flex flex-col items-center">
                <div className="w-full h-[9px] mt-[3px] border-y border-[#999] bg-white" />
                <div className="w-[9px] h-[352px] mt-[2px] rounded-full bg-[#bdbdbd]" />
            </div>
        </div>
    );
}

function SheetRow({ r }: { r: number }) {
    const nudge = isHighRow(r) ? 'pt-0' : 'pt-[2px]';
    return (
        <>
            <div className={`border-r border-b border-[#9a9a9a] flex items-center justify-center ${nudge} font-bold text-[16.5px] ${r === 18 ? 'bg-gradient-to-b from-[#a6a6a6] to-[#888] text-white' : 'bg-gradient-to-b from-[#e6e6e6] to-[#d8d8d8] text-[#666]'}`}>
                {r}
            </div>
            {columns.map((c, i) => {
                if (r === 3 && c === 'B') return null;
                const key = `${c}${r}`;
                const cell = cells[key];
                const rule = rules[r];
                const ruled = rule && i < rule[0];
                let border = 'border-b border-b-[#d2d2d2]';
                if (ruled) border = rule[1] ? 'border-b-2 border-b-black' : 'border-b border-b-black';
                const right = i === columns.length - 1 ? 'border-r border-r-[#9a9a9a]' : 'border-r border-r-[#d2d2d2]';
                const align = cell?.[1];
                let cls = 'justify-start pl-[3px] tracking-[0.3px]';
                if (key === 'A1') cls = 'justify-start pl-[3px] tracking-[-0.15px]';
                if (key === 'A10') cls = 'justify-start pl-[3px] tracking-[-0.4px]';
                if (align === 'r') cls = 'justify-end pr-[3.5px]';
                if (align === 'c') cls = 'justify-center italic text-[16px]';
                const selected = key === 'B18';
                return (
                    <div
                        key={key}
                        className={`relative flex items-center ${nudge} whitespace-nowrap ${border} ${right} ${cls} ${r === 3 && c === 'A' ? 'col-span-2' : ''} ${clippedLeft.includes(key) ? '[clip-path:inset(0_-20px_0_0)]' : ''} ${selected ? 'border-2 border-[#5f5f5f]' : ''}`}
                    >
                        {r === 3 && c === 'A' ? <span className="w-full text-center italic text-[16.2px] tracking-normal">Regression Statistics</span> : cell?.[0]}
                        {selected && <span className="absolute -right-[4px] -bottom-[4px] w-[6px] h-[6px] bg-[#8a8a8a] border border-[#444]" />}
                    </div>
                );
            })}
        </>
    );
}

function BottomBar() {
    return (
        <div className="h-[35px] flex bg-[#e6e6e6] text-[9.5px] text-[#333]">
            <div className="w-[67px] flex items-start pt-[5px] pl-[4px] border-r border-[#a8a8a8] border-t border-t-[#8a8a8a]">
                <div className="w-[58px] h-[23px] flex rounded-[4px] border border-[#666] overflow-hidden">
                    <div className="w-[29px] bg-gradient-to-b from-[#5c5c5c] to-[#444] flex items-center justify-center">
                        <svg width="15" height="13" viewBox="0 0 15 13"><rect x=".5" y=".5" width="14" height="12" fill="#9ad0f5" stroke="#2a88d8" /><path d="M4 0 V13 M7.5 0 V13 M11 0 V13 M0 4 H15 M0 7 H15 M0 10 H15" stroke="#2a88d8" strokeWidth=".7" /></svg>
                    </div>
                    <div className="flex-1 bg-gradient-to-b from-[#ececec] to-[#cfcfcf] flex items-center justify-center gap-[2px]">
                        <SplitGridIcon />
                        <SplitGridIcon />
                    </div>
                </div>
            </div>
            <div className="flex-1 flex flex-col min-w-0">
                <div className="h-[17px] flex border-t border-[#6f6f6f] bg-[#8fa3b9]">
                    <div className="w-[66px] bg-[#e4e4e4] flex items-center justify-center gap-[8px] text-[#aaa]">
                        <svg width="9" height="7" viewBox="0 0 9 7"><path d="M1 0 V7 M9 0 V7 L3 3.5 Z" stroke="#aaa" fill="#aaa" /></svg>
                        <svg width="7" height="7" viewBox="0 0 7 7"><path d="M7 0 V7 L0 3.5 Z" fill="#aaa" /></svg>
                        <svg width="7" height="7" viewBox="0 0 7 7"><path d="M0 0 V7 L7 3.5 Z" fill="#aaa" /></svg>
                        <svg width="9" height="7" viewBox="0 0 9 7"><path d="M8 0 V7 M0 0 V7 L6 3.5 Z" stroke="#aaa" fill="#aaa" /></svg>
                    </div>
                    <div className="w-[760px] flex pl-[13px] text-[9.3px]">
                        <div className="w-[97px] h-[15px] bg-gradient-to-b from-[#e0e0e0] to-[#d2d2d2] border-b border-x border-[#777] rounded-b-[5px] text-center leading-[12px] text-[#222]">Beta Calculation</div>
                        <div className="w-[113px] h-[16px] bg-white border-b border-r border-[#777] rounded-b-[5px] text-center leading-[12px] font-bold text-[9.2px] text-[#111] -ml-[1px]">Regression Output</div>
                        <div className="w-[21px] h-[15px] bg-[#e0e0e0] border-b border-r border-[#777] rounded-b-[5px] text-center leading-[12px] font-bold text-[12px] text-[#444]">+</div>
                    </div>
                    <div className="flex-1 bg-white border-l-[2px] border-[#c8c8c8] flex items-center">
                        <div className="w-[336px] h-[9px] rounded-full bg-[#bdbdbd]" />
                        <div className="ml-auto w-[12px] h-full border-l border-[#999] flex justify-center items-center gap-[2px]">
                            <span className="w-[1px] h-[9px] bg-[#888]" /><span className="w-[1px] h-[9px] bg-[#888]" />
                        </div>
                    </div>
                    <div className="w-[15px] bg-white" />
                </div>
                <div className="flex-1 flex items-center bg-gradient-to-b from-[#ececec] to-[#dcdcdc] border-t border-[#a8a8a8]">
                    <div className="w-[93px] h-full pl-[3px] leading-[15px] border-r border-[#bdbdbd]">Normal View</div>
                    <div className="w-[536px] h-full pl-[6px] leading-[15px] border-r border-[#bdbdbd]">Ready</div>
                    <div className="w-[138px] h-full pl-[3px] pr-[4px] flex items-center justify-between border-r border-[#8a8a8a] text-[#222] text-[9.9px] pb-[2px]">
                        <span>Sum=0.985853601</span>
                        <span className="w-0 h-0 border-x-[5px] border-x-transparent border-t-[5px] border-t-[#111]" />
                    </div>
                    <div className="w-[36px] h-full border-r border-[#bdbdbd]" />
                    <div className="w-[33px] h-full border-r border-[#bdbdbd]" />
                    <div className="w-[29px] h-full border-r border-[#bdbdbd]" />
                    <div className="flex-1 h-full flex items-end justify-end">
                        <svg width="11" height="11" viewBox="0 0 11 11"><path d="M11 1 L1 11 M11 5 L5 11 M11 8.5 L8.5 11" stroke="#999" /></svg>
                    </div>
                </div>
            </div>
        </div>
    );
}

export default function App() {
    return (
        <div className="w-[1440px] h-[813px] flex flex-col overflow-hidden bg-white font-['DejaVu_Sans',sans-serif]">
            <div className="h-[53px] bg-gradient-to-b from-[#ececec] to-[#d2d2d2] border-b border-[#b4b4b4]">
                <div className="h-[22px] flex items-center relative">
                    <div className="absolute left-[9px] top-[5px] flex gap-[8px]">
                        <span className="w-[12px] h-[12px] rounded-full bg-[#fc3d39] border border-[#e0443e] flex items-center justify-center"><span className="w-[4px] h-[4px] rounded-full bg-[#5a0f0c]" /></span>
                        <span className="w-[12px] h-[12px] rounded-full bg-[#fdbc40] border border-[#e2a32a]" />
                        <span className="w-[12px] h-[12px] rounded-full bg-[#34c84a] border border-[#28ad3a]" />
                    </div>
                    <div className="w-full flex items-center justify-center pl-[3px] pt-[1px] gap-[5px] font-['Liberation_Sans',sans-serif] text-[13.7px] text-[#707070]">
                        <svg width="12" height="15" viewBox="0 0 12 15">
                            <path d="M.5 .5 H8 L11.5 4 V14.5 H.5 Z" fill="#f5f8f2" stroke="#c4d0bc" />
                            <path d="M2 6 H10 M2 8.5 H10 M2 11 H10 M5 5 V13" stroke="#b8d0b0" />
                        </svg>
                        <span>Beta-Calculation-Worksheet.xlsx</span>
                    </div>
                </div>
                <Toolbar />
            </div>
            <TabStrip />
            <Ribbon />
            <FormulaBar />
            <Sheet />
            <BottomBar />
        </div>
    );
}
